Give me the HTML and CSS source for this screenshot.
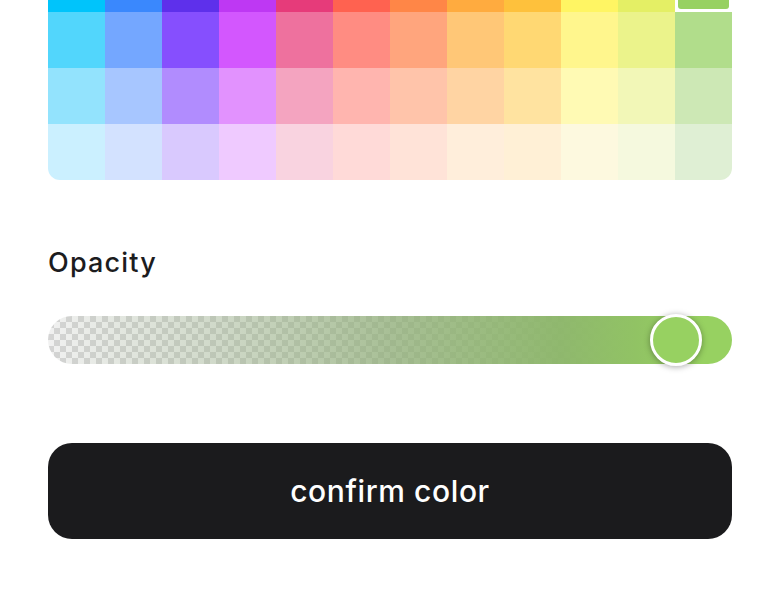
FILE: index.html
```html
<!DOCTYPE html>
<html>
<head>
<meta charset="utf-8">
<link rel="stylesheet" href="styles.css">
</head>
<body>
<div class="page">
  <div class="grid">
    <div class="cell" style="background:#00c4fb"></div>
    <div class="cell" style="background:#3a88fd"></div>
    <div class="cell" style="background:#5e30eb"></div>
    <div class="cell" style="background:#be38f3"></div>
    <div class="cell" style="background:#e63b7a"></div>
    <div class="cell" style="background:#ff6250"></div>
    <div class="cell" style="background:#ff8647"></div>
    <div class="cell" style="background:#ffab3f"></div>
    <div class="cell" style="background:#fec13c"></div>
    <div class="cell" style="background:#fff563"></div>
    <div class="cell" style="background:#e4ef65"></div>
    <div class="cell selected"><span class="sel-inner"></span></div>

    <div class="cell" style="background:#52d6fc"></div>
    <div class="cell" style="background:#74a7ff"></div>
    <div class="cell" style="background:#864ffe"></div>
    <div class="cell" style="background:#d357fe"></div>
    <div class="cell" style="background:#ee719e"></div>
    <div class="cell" style="background:#ff8c82"></div>
    <div class="cell" style="background:#ffa57d"></div>
    <div class="cell" style="background:#ffc777"></div>
    <div class="cell" style="background:#ffd873"></div>
    <div class="cell" style="background:#fff68d"></div>
    <div class="cell" style="background:#ebf38b"></div>
    <div class="cell" style="background:#b1dd8b"></div>

    <div class="cell" style="background:#93e3fd"></div>
    <div class="cell" style="background:#a7c6ff"></div>
    <div class="cell" style="background:#b18cfe"></div>
    <div class="cell" style="background:#e292fe"></div>
    <div class="cell" style="background:#f4a4c0"></div>
    <div class="cell" style="background:#ffb5af"></div>
    <div class="cell" style="background:#ffc4aa"></div>
    <div class="cell" style="background:#ffd4a3"></div>
    <div class="cell" style="background:#ffe3a0"></div>
    <div class="cell" style="background:#fffab4"></div>
    <div class="cell" style="background:#f2f7b7"></div>
    <div class="cell" style="background:#cde8b5"></div>

    <div class="cell" style="background:#cbf0ff"></div>
    <div class="cell" style="background:#d3e2ff"></div>
    <div class="cell" style="background:#d9c9fe"></div>
    <div class="cell" style="background:#efcaff"></div>
    <div class="cell" style="background:#f9d3e0"></div>
    <div class="cell" style="background:#ffdad8"></div>
    <div class="cell" style="background:#ffe3d8"></div>
    <div class="cell" style="background:#ffeedb"></div>
    <div class="cell" style="background:#fff0d6"></div>
    <div class="cell" style="background:#fdf9df"></div>
    <div class="cell" style="background:#f5f9de"></div>
    <div class="cell" style="background:#dfefd4"></div>
  </div>

  <div class="label">Opacity</div>

  <div class="slider">
    <div class="track"></div>
    <div class="thumb"></div>
  </div>

  <button class="confirm">confirm color</button>
</div>
</body>
</html>
```
FILE: styles.css
```css
html, body {
  margin: 0;
  padding: 0;
  background: #ffffff;
}
body {
  font-family: Inter, "Noto Sans", sans-serif;
  overflow: hidden;
  height: 594px;
}
.page {
  padding: 0 48px;
  display: flex;
  flex-direction: column;
}
.grid {
  margin-top: -44px;
  display: grid;
  grid-template-columns: repeat(12, 1fr);
  grid-auto-rows: 56px;
  border-radius: 0 0 12px 12px;
  overflow: hidden;
}
.cell {
  position: relative;
}
.cell.selected {
  background: #ffffff;
  display: flex;
  border-radius: 0 0 4px 4px;
}
.sel-inner {
  flex: 1;
  margin: 0 3px 3px 3px;
  background: #97d161;
  border-radius: 0 0 3px 3px;
}
.label {
  margin-top: 67px;
  font-size: 27px;
  line-height: 32px;
  font-weight: 500;
  color: #1c1c1e;
  letter-spacing: 1.2px;
}
.slider {
  position: relative;
  margin-top: 37px;
  height: 48px;
}
.track {
  height: 48px;
  border-radius: 24px;
  background:
    linear-gradient(to right,
      rgba(150, 175, 130, 0) 0%,
      rgba(145, 172, 125, 0.35) 25%,
      rgba(140, 172, 115, 0.72) 50%,
      rgba(140, 182, 105, 0.96) 75%,
      rgba(145, 195, 100, 1) 86%,
      #97d161 96%),
    repeating-conic-gradient(#d4d4d4 0 25%, #f1f1f1 0 50%) 0 0 / 12px 12px;
}
.thumb {
  position: absolute;
  left: 602px;
  top: -2px;
  width: 46px;
  height: 46px;
  border: 3px solid #ffffff;
  border-radius: 50%;
  background: #97d161;
  box-shadow: 0 1px 6px rgba(0, 0, 0, 0.35);
}
.confirm {
  margin-top: 79px;
  height: 96px;
  border: none;
  border-radius: 24px;
  background: #1b1b1d;
  color: #ffffff;
  font-family: Inter, "Noto Sans", sans-serif;
  font-size: 30px;
  font-weight: 500;
  letter-spacing: 0.6px;
  padding: 0;
}
```
